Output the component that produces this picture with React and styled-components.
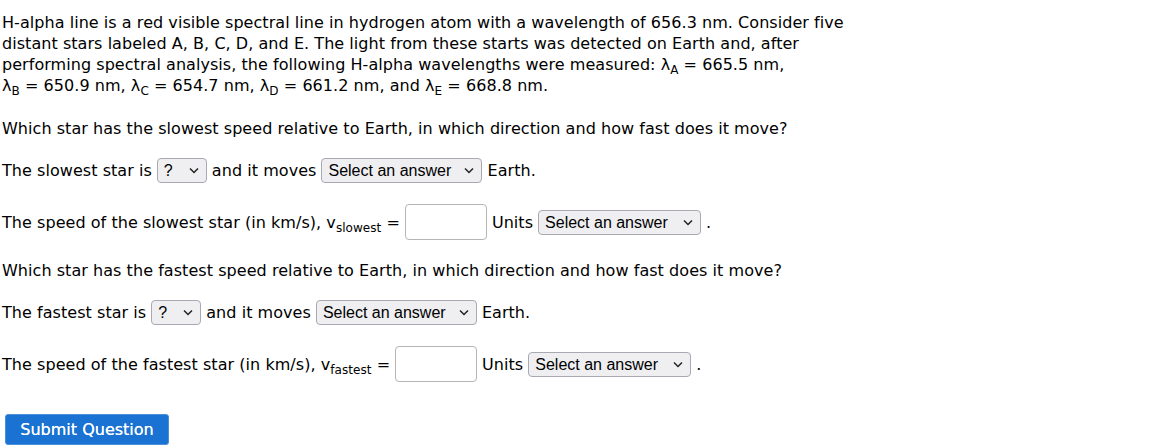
import React from "react";
import styled, { createGlobalStyle } from "styled-components";

const Global = createGlobalStyle`
  html, body { margin: 0; padding: 0; background: #fff; }
  body { font-family: "DejaVu Sans", "Open Sans", sans-serif; color: #000; }
`;

const Page = styled.div`
  padding: 12px 2px 0 2px;
  font-size: 16px;
  line-height: 21px;
  letter-spacing: 0.05px;
`;

const Para = styled.p`
  margin: 0 0 ${(p) => p.$mb || 0}px 0;
`;

const Row = styled.div`
  display: flex;
  align-items: center;
  gap: 5px;
  height: ${(p) => p.$h || 26}px;
  margin-bottom: ${(p) => p.$mb || 0}px;
  white-space: nowrap;
`;

const Sub = styled.sub`
  font-size: 12px;
  line-height: 0;
  vertical-align: -4px;
`;

const SelectBox = styled.div`
  display: inline-flex;
  align-items: center;
  justify-content: space-between;
  box-sizing: border-box;
  width: ${(p) => p.$w}px;
  height: 25px;
  padding: 0 7px 0 6px;
  background: #efeff2;
  border: 1px solid #a9a9b3;
  border-radius: 4px;
  font-family: "Liberation Sans", Arial, sans-serif;
  font-size: 16px;
  letter-spacing: 0;
  color: #000;
`;

const Input = styled.div`
  box-sizing: border-box;
  width: ${(p) => p.$w}px;
  height: 36px;
  border: 1px solid #b5b5b5;
  border-radius: 4px;
  background: #fff;
`;

const Button = styled.button`
  margin: 0 0 0 3px;
  width: 164px;
  height: 31px;
  background: #1a73d2;
  border: 1px solid #4a8fd8;
  border-radius: 3px;
  color: #fff;
  font-family: "DejaVu Sans", "Open Sans", sans-serif;
  font-size: 16px;
  font-weight: 400;
  text-shadow: 0 0 0.4px #fff;
  padding: 0;
`;

const Chevron = () => (
  <svg width="10" height="7" viewBox="0 0 10 7">
    <path d="M1 1.5 L5 5.5 L9 1.5" fill="none" stroke="#222" strokeWidth="1.5" />
  </svg>
);

const Select = ({ w, children }) => (
  <SelectBox $w={w}>
    <span>{children}</span>
    <Chevron />
  </SelectBox>
);

export default function App() {
  return (
    <>
      <Global />
      <Page>
        <Para $mb={22}>
          H-alpha line is a red visible spectral line in hydrogen atom with a wavelength of 656.3 nm. Consider five
          <br />
          distant stars labeled A, B, C, D, and E. The light from these starts was detected on Earth and, after
          <br />
          performing spectral analysis, the following H-alpha wavelengths were measured: λ<Sub>A</Sub> = 665.5 nm,
          <br />
          λ<Sub>B</Sub> = 650.9 nm, λ<Sub>C</Sub> = 654.7 nm, λ<Sub>D</Sub> = 661.2 nm, and λ<Sub>E</Sub> = 668.8 nm.
        </Para>
        <Para $mb={18}>
          Which star has the slowest speed relative to Earth, in which direction and how fast does it move?
        </Para>
        <Row $mb={21}>
          The slowest star is <Select w={50}>?</Select> and it moves{" "}
          <Select w={161}>Select an answer</Select> Earth.
        </Row>
        <Row $h={36} $mb={20}>
          <span>
            The speed of the slowest star (in km/s), v<Sub>slowest</Sub> =
          </span>
          <Input $w={82} />
          Units <Select w={163}>Select an answer</Select> .
        </Row>
        <Para $mb={18}>
          Which star has the fastest speed relative to Earth, in which direction and how fast does it move?
        </Para>
        <Row $mb={21}>
          The fastest star is <Select w={50}>?</Select> and it moves{" "}
          <Select w={161}>Select an answer</Select> Earth.
        </Row>
        <Row $h={36} $mb={32}>
          <span>
            The speed of the fastest star (in km/s), v<Sub>fastest</Sub> =
          </span>
          <Input $w={82} />
          Units <Select w={163}>Select an answer</Select> .
        </Row>
        <Button>Submit Question</Button>
      </Page>
    </>
  );
}
